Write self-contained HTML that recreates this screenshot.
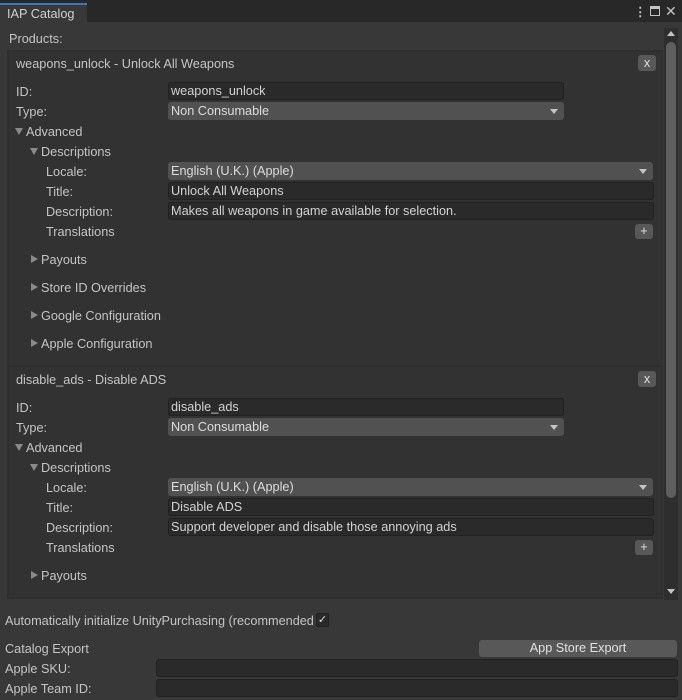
<!DOCTYPE html><html><head><style>
*{margin:0;padding:0;box-sizing:border-box}
body{width:682px;height:700px;background:#383838;font-family:"Liberation Sans",sans-serif;font-size:12.7px;color:#c4c4c4;position:relative;overflow:hidden}
.a{position:absolute;white-space:nowrap}
.t{position:absolute;white-space:nowrap;line-height:14px}
.f{position:absolute;background:#2a2a2a;border:1px solid #212121;border-radius:3px;height:18px;padding-left:2px;line-height:16px;color:#d2d2d2}
.d{position:absolute;background:#515151;border-radius:3px;height:18px;padding-left:3px;line-height:18px;color:#dcdcdc}
.d:after{content:"";position:absolute;right:6px;top:7px;border-left:4px solid transparent;border-right:4px solid transparent;border-top:5px solid #c4c4c4}
.tri{display:inline-block;width:0;height:0;margin-right:3px;vertical-align:1px}
.dn{border-left:4px solid transparent;border-right:4px solid transparent;border-top:7px solid #8a8a8a}
.rt{border-top:4px solid transparent;border-bottom:4px solid transparent;border-left:7px solid #8a8a8a}
.btn{position:absolute;background:#585858;border-radius:3px;text-align:center;color:#e0e0e0}
.box{position:absolute;background:#323232;left:9px;width:653px}
</style></head><body>
<div class="a" style="left:0;top:0;width:682px;height:22px;background:#282828"></div>
<div class="a" style="left:0;top:3px;width:87px;height:20px;background:#383838;border-top:2px solid #3a79bb"></div>
<div class="t" style="left:7px;top:7px;color:#d0d0d0">IAP Catalog</div>
<div class="t" style="left:634px;top:5px;color:#c4c4c4;font-weight:bold">⋮</div>
<div class="a" style="left:650px;top:6px;width:10px;height:10px;border:1px solid #c4c4c4;border-top-width:3px"></div>
<div class="t" style="left:665px;top:4px;font-size:14px;color:#c4c4c4">✕</div>
<div class="t" style="left:9px;top:32px">Products:</div>
<div class="a" style="left:7px;top:50px;width:656px;height:549px;background:#2f2f2f"></div>
<div class="box" style="top:52px;height:313px"></div>
<div class="box" style="top:367px;height:230px"></div>
<div class="a" style="left:664px;top:28px;width:14px;height:572px;background:#2e2e2e"></div>
<div class="a" style="left:666px;top:42px;width:10px;height:456px;background:#5e5e5e;border-radius:5px"></div>
<div class="a" style="left:667px;top:31px;border-left:4px solid transparent;border-right:4px solid transparent;border-bottom:5px solid #c4c4c4"></div>
<div class="a" style="left:667px;top:589px;border-left:4px solid transparent;border-right:4px solid transparent;border-top:5px solid #c4c4c4"></div>

<div class="t" style="left:16px;top:57px">weapons_unlock - Unlock All Weapons</div>
<div class="btn" style="left:638px;top:55px;width:18px;height:16px;line-height:16px">x</div>
<div class="t" style="left:16px;top:85px">ID:</div><div class="f" style="left:168px;top:82px;width:396px">weapons_unlock</div>
<div class="t" style="left:16px;top:105px">Type:</div><div class="d" style="left:168px;top:102px;width:396px">Non Consumable</div>
<div class="t" style="left:15px;top:125px"><span class="tri dn"></span>Advanced</div>
<div class="t" style="left:30px;top:145px"><span class="tri dn"></span>Descriptions</div>
<div class="t" style="left:46px;top:165px">Locale:</div><div class="d" style="left:168px;top:162px;width:485px">English (U.K.) (Apple)</div>
<div class="t" style="left:46px;top:185px">Title:</div><div class="f" style="left:168px;top:182px;width:486px">Unlock All Weapons</div>
<div class="t" style="left:46px;top:205px">Description:</div><div class="f" style="left:168px;top:202px;width:486px">Makes all weapons in game available for selection.</div>
<div class="t" style="left:46px;top:225px">Translations</div>
<div class="btn" style="left:635px;top:224px;width:18px;height:15px;line-height:15px">+</div>
<div class="t" style="left:31px;top:253px"><span class="tri rt"></span>Payouts</div>
<div class="t" style="left:31px;top:281px"><span class="tri rt"></span>Store ID Overrides</div>
<div class="t" style="left:31px;top:309px"><span class="tri rt"></span>Google Configuration</div>
<div class="t" style="left:31px;top:337px"><span class="tri rt"></span>Apple Configuration</div>

<div class="t" style="left:16px;top:373px">disable_ads - Disable ADS</div>
<div class="btn" style="left:638px;top:371px;width:18px;height:16px;line-height:16px">x</div>
<div class="t" style="left:16px;top:401px">ID:</div><div class="f" style="left:168px;top:398px;width:396px">disable_ads</div>
<div class="t" style="left:16px;top:421px">Type:</div><div class="d" style="left:168px;top:418px;width:396px">Non Consumable</div>
<div class="t" style="left:15px;top:441px"><span class="tri dn"></span>Advanced</div>
<div class="t" style="left:30px;top:461px"><span class="tri dn"></span>Descriptions</div>
<div class="t" style="left:46px;top:481px">Locale:</div><div class="d" style="left:168px;top:478px;width:485px">English (U.K.) (Apple)</div>
<div class="t" style="left:46px;top:501px">Title:</div><div class="f" style="left:168px;top:498px;width:486px">Disable ADS</div>
<div class="t" style="left:46px;top:521px">Description:</div><div class="f" style="left:168px;top:518px;width:486px">Support developer and disable those annoying ads</div>
<div class="t" style="left:46px;top:541px">Translations</div>
<div class="btn" style="left:635px;top:540px;width:18px;height:15px;line-height:15px">+</div>
<div class="t" style="left:31px;top:569px"><span class="tri rt"></span>Payouts</div>

<div class="t" style="left:5px;top:614px">Automatically initialize UnityPurchasing (recommended</div>
<div class="a" style="left:316px;top:613px;width:13px;height:14px;background:#2a2a2a;border:1px solid #212121;border-radius:2px;color:#e0e0e0;font-size:11px;line-height:12px;text-align:center">✓</div>
<div class="t" style="left:5px;top:642px">Catalog Export</div>
<div class="btn" style="left:479px;top:640px;width:198px;height:17px;line-height:17px">App Store Export</div>
<div class="t" style="left:5px;top:662px">Apple SKU:</div><div class="f" style="left:156px;top:659px;width:522px"></div>
<div class="t" style="left:5px;top:682px">Apple Team ID:</div><div class="f" style="left:156px;top:679px;width:522px"></div>
</body></html>
